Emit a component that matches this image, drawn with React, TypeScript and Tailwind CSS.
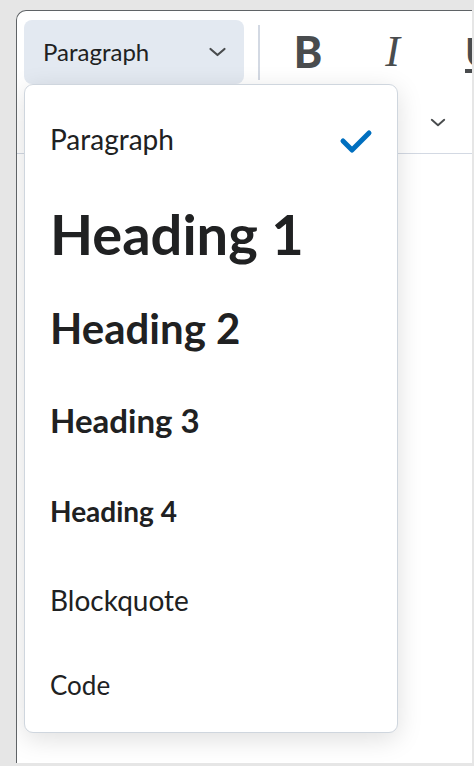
import React from "react";

const items = [
  { label: "Paragraph", cls: "text-[28px] font-normal", h: "h-[95px]", checked: true },
  { label: "Heading 1", cls: "text-[56px] font-bold", h: "h-[94px]" },
  { label: "Heading 2", cls: "text-[42px] font-bold", h: "h-[94px]" },
  { label: "Heading 3", cls: "text-[33px] font-bold", h: "h-[91px]" },
  { label: "Heading 4", cls: "text-[28px] font-bold", h: "h-[91px]" },
  { label: "Blockquote", cls: "text-[28px] font-normal", h: "h-[88px]" },
  { label: "Code", cls: "text-[26px] font-normal", h: "h-[82px]" },
];

function Chevron({ className }: { className?: string }) {
  return (
    <svg viewBox="0 0 18 10" className={className} fill="none">
      <path d="M2 2l7 6 7-6" stroke="#494c4e" strokeWidth="2.2" strokeLinecap="round" strokeLinejoin="round" />
    </svg>
  );
}

export default function App() {
  return (
    <div className="w-[474px] h-[766px] bg-[#e6e6e6] pt-[10px] pl-[16px] pr-[2px] pb-[3px] overflow-hidden font-['Lato',sans-serif] text-[#202122]">
      <div className="relative h-full bg-white border-t border-l border-[#5f6366] rounded-tl-[10px] overflow-hidden">
        {/* toolbar */}
        <div className="flex items-start h-[80px] pl-[7px] pt-[9px]">
          <div className="shrink-0 flex items-center justify-between w-[220px] h-[64px] bg-[#e3e9f1] rounded-[8px] pl-[19px] pr-[17px]">
            <span className="text-[24px] leading-none">Paragraph</span>
            <Chevron className="w-[19px] h-[10px]" />
          </div>
          <div className="shrink-0 ml-[14px] mt-[5px] w-[2px] h-[55px] bg-[#d3d9e3]" />
          <div className="shrink-0 ml-[34px] mt-[17px] w-[28px] flex justify-center text-[43px] leading-[30px] font-black text-[#494c4e]">B</div>
          <div className="shrink-0 ml-[61px] mt-[17px] w-[19px] flex justify-center text-[44px] leading-[30px] italic font-['Liberation_Serif',serif] text-[#494c4e]">I</div>
          <div className="shrink-0 ml-[63px] mt-[17px] text-[40px] leading-[30px] font-bold underline text-[#494c4e]">U</div>
        </div>
        <div className="flex items-center justify-end h-[63px] border-b border-[#d3d9e3] pr-[26px]">
          <Chevron className="w-[16px] h-[9px]" />
        </div>

        {/* dropdown */}
        <div className="absolute left-[7px] top-[73px] w-[374px] bg-white border border-[#cfd6de] rounded-[9px] shadow-[0_6px_26px_rgba(0,0,0,0.13)] pt-[7px] pb-[5px]">
          {items.map((it) => (
            <div key={it.label} className={`flex items-center justify-between pl-[25px] pr-[24px] ${it.h}`}>
              <span className={`${it.cls} leading-[1.2]`}>{it.label}</span>
              {it.checked && (
                <svg viewBox="0 0 34 26" className="w-[34px] h-[26px] mt-[2px]" fill="none">
                  <path d="M4 13l9 9L30 5" stroke="#006fbf" strokeWidth="5" strokeLinecap="round" strokeLinejoin="round" />
                </svg>
              )}
            </div>
          ))}
        </div>
      </div>
    </div>
  );
}
